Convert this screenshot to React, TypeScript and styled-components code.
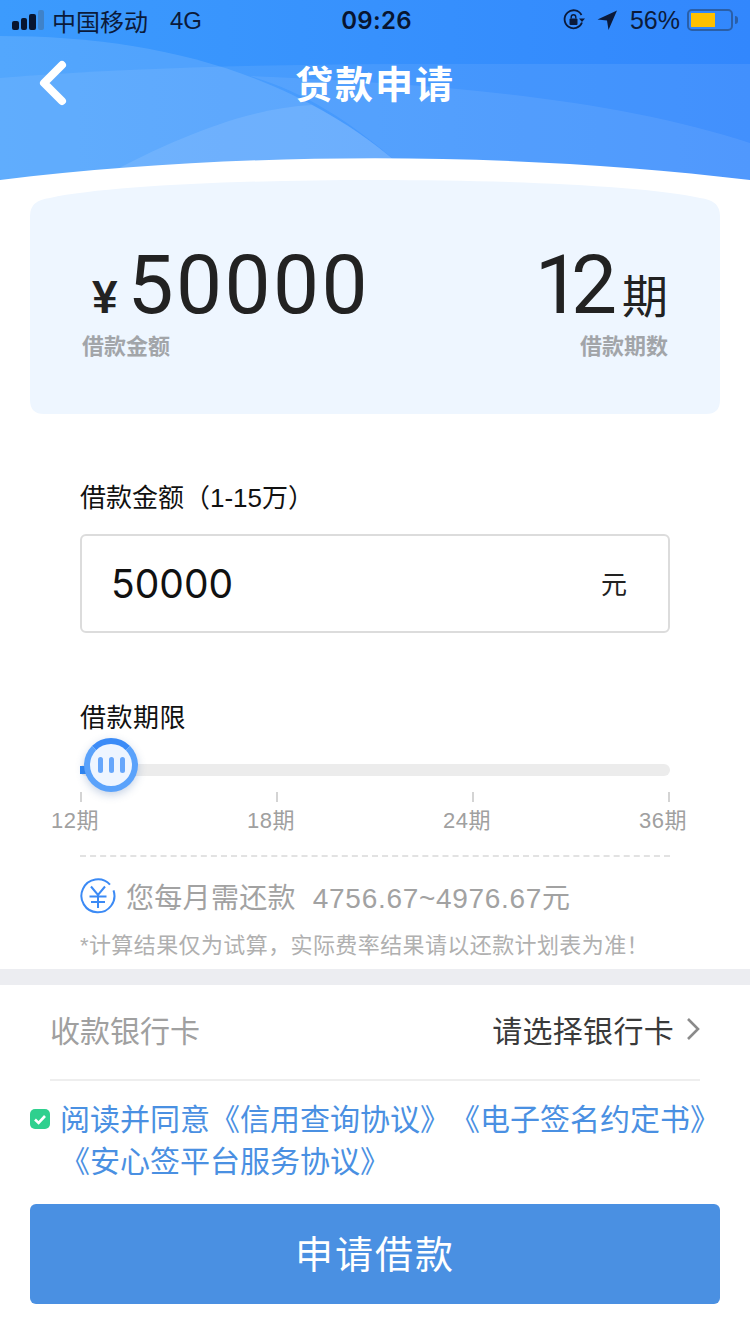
import React from 'react';
import styled, { createGlobalStyle } from 'styled-components';

const FONT = `"Liberation Sans", Arial, "Noto Sans CJK SC", sans-serif`;
const ROUND_FONT = `Inter, "Liberation Sans", "Noto Sans CJK SC", sans-serif`;

const GlobalStyle = createGlobalStyle`
    html, body {
        margin: 0;
        padding: 0;
        background: #fff;
        font-family: ${FONT};
        text-spacing-trim: space-all;
    }
`;

export default function App() {
    return (
        <Page>
            <GlobalStyle />
            <Header>
                <HeaderArt viewBox="0 0 750 180" preserveAspectRatio="none">
                    <defs>
                        <linearGradient id="bg" x1="0" y1="0" x2="1" y2="0">
                            <stop offset="0" stopColor="#3c9bfd" />
                            <stop offset="1" stopColor="#3287fd" />
                        </linearGradient>
                    </defs>
                    <rect width="750" height="180" fill="url(#bg)" />
                    <path d="M0 78C150 66 300 64 450 64L750 64L750 180L0 180Z" fill="#fff" fillOpacity="0.08" />
                    <path d="M250 76C450 84 620 100 750 143L750 180L400 180L400 165C350 120 300 90 250 76Z" fill="#fff" fillOpacity="0.08" />
                    <path d="M0 36C150 36 290 70 400 165L400 180L0 180Z" fill="#fff" fillOpacity="0.12" />
                    <path d="M100 178C180 135 250 108 312 105C343 121 372.5 141 400 165L400 180L100 180Z" fill="#fff" fillOpacity="0.1" />
                    <path d="M0 180C240 151 510 151 750 180Z" fill="#fff" />
                </HeaderArt>
                <StatusBar>
                    <StatusSide>
                        <Signal>
                            <SignalBar $h={9} />
                            <SignalBar $h={12} />
                            <SignalBar $h={16} />
                            <SignalBar $h={20} $dim />
                        </Signal>
                        <Carrier>中国移动</Carrier>
                        <Network>4G</Network>
                    </StatusSide>
                    <Clock>09:26</Clock>
                    <StatusSide>
                        <LockIcon width="24" height="24" viewBox="0 0 24 24" fill="none">
                            <path d="M20 14.5A9 9 0 1 1 19.5 7" stroke="#0b1a3a" strokeWidth="1.8" />
                            <path d="M17 10.5h6l-3 3.6z" fill="#0b1a3a" />
                            <rect x="7.5" y="10.5" width="8" height="6.5" rx="1" fill="#0b1a3a" />
                            <path d="M9.2 10.5V9a2.3 2.3 0 0 1 4.6 0v1.5" stroke="#0b1a3a" strokeWidth="1.4" />
                        </LockIcon>
                        <svg width="22" height="22" viewBox="0 0 22 22">
                            <path d="M21 1.5L1.5 10.5L11 11.5L12.5 21Z" fill="#0b1a3a" />
                        </svg>
                        <Battery>56%</Battery>
                        <BatteryShell>
                            <BatteryFill />
                        </BatteryShell>
                    </StatusSide>
                </StatusBar>
                <NavBar>
                    <BackIcon width="30" height="46" viewBox="0 0 30 46" fill="none">
                        <path d="M24 5L6 23L24 41" stroke="#fff" strokeWidth="8" strokeLinecap="round" strokeLinejoin="round" />
                    </BackIcon>
                    <NavTitle>贷款申请</NavTitle>
                </NavBar>
            </Header>

            <SummaryCard>
                <SummaryColumn>
                    <AmountLine>
                        <Yen>¥</Yen>
                        <BigNumber>50000</BigNumber>
                    </AmountLine>
                    <SummaryLabel>借款金额</SummaryLabel>
                </SummaryColumn>
                <SummaryColumn $right>
                    <AmountLine>
                        <TermNumber>12</TermNumber>
                        <Unit>期</Unit>
                    </AmountLine>
                    <SummaryLabel>借款期数</SummaryLabel>
                </SummaryColumn>
            </SummaryCard>

            <FormSection>
                <FieldLabel>借款金额（1-15万）</FieldLabel>
                <AmountBox>
                    <AmountValue>50000</AmountValue>
                    <AmountUnit>元</AmountUnit>
                </AmountBox>

                <TermLabel>借款期限</TermLabel>
                <Slider>
                    <SliderFill />
                    <Thumb>
                        <Grip />
                        <Grip />
                        <Grip />
                    </Thumb>
                </Slider>
                <Ticks>
                    {['12期', '18期', '24期', '36期'].map(t => (
                        <Tick key={t}>
                            <TickMark />
                            <TickText>{t}</TickText>
                        </Tick>
                    ))}
                </Ticks>
                <DashedRule />
                <Repayment>
                    <svg width="36" height="36" viewBox="0 0 36 36" fill="none">
                        <path d="M30 6.6A16.5 16.5 0 1 0 33.5 12.4" stroke="#3b8af5" strokeWidth="2" />
                        <path d="M11 8.5L18 17L25 8.5M9.5 18.5H26.5M11 24H25M18 17V30" stroke="#3b8af5" strokeWidth="2" />
                    </svg>
                    <RepayLabel>您每月需还款</RepayLabel>
                    <RepayValue>4756.67~4976.67元</RepayValue>
                </Repayment>
                <Disclaimer>*计算结果仅为试算，实际费率结果请以还款计划表为准！</Disclaimer>
            </FormSection>

            <Divider />

            <BankRow>
                <BankLabel>收款银行卡</BankLabel>
                <BankPick>
                    请选择银行卡
                    <svg width="14" height="24" viewBox="0 0 14 24" fill="none">
                        <path d="M2 2L12 12L2 22" stroke="#8a8a8a" strokeWidth="2.6" />
                    </svg>
                </BankPick>
            </BankRow>

            <Agreement>
                <Check viewBox="0 0 20 20" width="20" height="20">
                    <rect width="20" height="20" rx="5" fill="#2fd08e" />
                    <path d="M5 10.5L8.6 14L15 7" fill="none" stroke="#fff" strokeWidth="2.6" />
                </Check>
                <AgreementText>
                    阅读并同意《信用查询协议》《电子签名约定书》
                    <br />
                    《安心签平台服务协议》
                </AgreementText>
            </Agreement>

            <SubmitButton>申请借款</SubmitButton>
        </Page>
    );
}

const Page = styled.div`
    width: 750px;
    height: 1334px;
    overflow: hidden;
    background: #fff;
    display: flex;
    flex-direction: column;
`;

const Header = styled.div`
    position: relative;
    height: 180px;
    flex: none;
`;

const HeaderArt = styled.svg`
    position: absolute;
    inset: 0;
    width: 750px;
    height: 180px;
`;

const StatusBar = styled.div`
    position: relative;
    height: 40px;
    padding: 0 12px;
    display: flex;
    align-items: center;
    justify-content: space-between;
    color: #0b1a3a;
`;

const StatusSide = styled.div`
    display: flex;
    align-items: center;
    gap: 12px;
    width: 300px;
    &:last-child {
        justify-content: flex-end;
    }
`;

const Signal = styled.div`
    display: flex;
    align-items: flex-end;
    gap: 2px;
    height: 20px;
    margin-right: -4px;
`;

const SignalBar = styled.span<{ $h: number; $dim?: boolean }>`
    width: 6.5px;
    height: ${p => p.$h}px;
    border-radius: 2px;
    background: ${p => (p.$dim ? '#3f82c9' : '#081530')};
`;

const Carrier = styled.span`
    font-size: 24px;
`;

const Network = styled.span`
    font-size: 24px;
    margin: 2px 0 0 10px;
`;

const Clock = styled.span`
    font-family: ${ROUND_FONT};
    font-size: 24px;
    font-weight: 600;
    letter-spacing: 0.3px;
    color: #081530;
    margin-left: 3px;
`;

const LockIcon = styled.svg`
    margin-right: -2px;
`;

const Battery = styled.span`
    font-size: 25px;
    margin-right: -5px;
`;

const BatteryShell = styled.div`
    position: relative;
    flex: none;
    width: 46px;
    height: 22px;
    box-sizing: border-box;
    padding: 2px;
    border: 2px solid #2a5fa8;
    border-radius: 5px;
    margin-right: 5px;
    &::after {
        content: '';
        position: absolute;
        right: -7px;
        top: 5px;
        width: 3px;
        height: 8px;
        border-radius: 0 3px 3px 0;
        background: #2a5fa8;
    }
`;

const BatteryFill = styled.div`
    width: 24px;
    height: 14px;
    background: #ffc000;
`;

const NavBar = styled.div`
    position: relative;
    height: 82px;
    display: flex;
    align-items: center;
    justify-content: center;
`;

const BackIcon = styled.svg`
    position: absolute;
    left: 38px;
    top: 20px;
`;

const NavTitle = styled.h1`
    margin: 0;
    font-size: 38px;
    font-weight: 700;
    color: #fff;
    letter-spacing: 2px;
`;

const SummaryCard = styled.div`
    flex: none;
    height: 234px;
    margin: 0 30px;
    padding: 58px 52px 0;
    box-sizing: border-box;
    display: flex;
    justify-content: space-between;
    background: #eef6ff;
    clip-path: path('M0 36 Q0 20 20 18 C130 -6 560 -6 670 18 Q690 20 690 36 L690 220 Q690 234 676 234 L14 234 Q0 234 0 220 Z');
`;

const SummaryColumn = styled.div<{ $right?: boolean }>`
    display: flex;
    flex-direction: column;
    align-items: ${p => (p.$right ? 'flex-end' : 'flex-start')};
`;

const AmountLine = styled.div`
    display: flex;
    align-items: baseline;
    height: 96px;
`;

const Yen = styled.span`
    font-size: 46px;
    font-weight: 700;
    color: #222;
    margin: 0 10px 0 10px;
`;

const BigNumber = styled.span`
    font-family: Roboto, ${FONT};
    font-size: 82px;
    line-height: 94px;
    letter-spacing: 2.4px;
    color: #222;
`;

const TermNumber = styled(BigNumber)`
    letter-spacing: -10px;
`;

const Unit = styled.span`
    font-size: 46px;
    color: #222;
    margin-left: 15px;
`;

const SummaryLabel = styled.span`
    font-size: 22px;
    font-weight: 700;
    color: #a2a5a9;
    line-height: 26px;
`;

const FormSection = styled.div`
    flex: none;
    padding: 67px 80px 0;
    height: 555px;
    box-sizing: border-box;
`;

const FieldLabel = styled.div`
    font-size: 26px;
    line-height: 34px;
    color: #111;
`;

const AmountBox = styled.div`
    margin-top: 19px;
    height: 99px;
    box-sizing: border-box;
    padding: 0 40px 0 29px;
    display: flex;
    align-items: center;
    justify-content: space-between;
    border: 2px solid #dcdcdc;
    border-radius: 6px;
`;

const AmountValue = styled.span`
    font-family: ${ROUND_FONT};
    font-size: 39px;
    color: #111;
`;

const AmountUnit = styled.span`
    font-size: 26px;
    color: #222;
    margin: 0 1px 3px 0;
`;

const TermLabel = styled.div`
    margin-top: 68px;
    font-size: 26px;
    letter-spacing: 0.5px;
    line-height: 34px;
    color: #111;
`;

const Slider = styled.div`
    position: relative;
    margin-top: 29px;
    height: 12px;
    border-radius: 6px;
    background: #ececec;
`;

const SliderFill = styled.div`
    width: 12px;
    height: 8px;
    margin-top: 2px;
    background: #2e86f5;
    position: absolute;
`;

const Thumb = styled.div`
    position: absolute;
    left: 4px;
    top: -26px;
    width: 54px;
    height: 54px;
    box-sizing: border-box;
    border: 6px solid #5aa2fb;
    border-top-color: #3b8bf7;
    border-radius: 50%;
    background: #eef5ff;
    box-shadow: 0 3px 8px rgba(70, 110, 170, 0.3);
    display: flex;
    align-items: center;
    justify-content: center;
    gap: 6px;
`;

const Grip = styled.span`
    width: 5px;
    height: 16px;
    border-radius: 2.5px;
    background: #66a6fb;
`;

const Ticks = styled.div`
    display: flex;
    justify-content: space-between;
    margin-top: 16px;
`;

const Tick = styled.div`
    width: 2px;
    display: flex;
    flex-direction: column;
    align-items: center;
`;

const TickMark = styled.span`
    width: 2px;
    height: 10px;
    background: #d4d4d4;
`;

const TickText = styled.span`
    margin: 4px 12px 0 0;
    font-size: 22px;
    letter-spacing: 0.5px;
    line-height: 30px;
    white-space: nowrap;
    color: #a0a0a0;
`;

const DashedRule = styled.div`
    margin-top: 19px;
    border-top: 2px dashed #e2e2e2;
`;

const Repayment = styled.div`
    margin-top: 21px;
    display: flex;
    align-items: center;
    height: 36px;
`;

const RepayLabel = styled.span`
    margin-left: 10px;
    font-size: 28px;
    letter-spacing: 0.3px;
    color: #a2a2a2;
`;

const RepayValue = styled.span`
    margin-left: 17px;
    font-size: 28px;
    letter-spacing: 0.7px;
    color: #a2a2a2;
`;

const Disclaimer = styled.div`
    margin-top: 17px;
    font-size: 22px;
    letter-spacing: 0.4px;
    line-height: 30px;
    white-space: nowrap;
    color: #b0b0b0;
`;

const Divider = styled.div`
    flex: none;
    height: 16px;
    background: #ecedf1;
`;

const BankRow = styled.div`
    flex: none;
    margin: 0 50px;
    height: 96px;
    box-sizing: border-box;
    padding-bottom: 6px;
    display: flex;
    align-items: center;
    justify-content: space-between;
    border-bottom: 2px solid #eeeeee;
`;

const BankLabel = styled.span`
    font-size: 30px;
    color: #a0a0a0;
`;

const BankPick = styled.span`
    display: flex;
    align-items: center;
    gap: 12px;
    font-size: 30px;
    letter-spacing: 0.3px;
    color: #3a3a3a;
`;

const Agreement = styled.div`
    flex: none;
    margin-top: 18px;
    padding-left: 30px;
    display: flex;
    gap: 10px;
    color: #4a90e2;
`;

const Check = styled.svg`
    flex: none;
    margin-top: 10px;
`;

const AgreementText = styled.div`
    font-size: 30px;
    line-height: 42px;
    white-space: nowrap;
`;

const SubmitButton = styled.button`
    flex: none;
    margin: 21px 30px 0;
    height: 100px;
    padding: 0 0 5px;
    border: 0;
    border-radius: 6px;
    background: #4a90e2;
    color: #fff;
    font-family: ${FONT};
    font-size: 38px;
    letter-spacing: 2px;
`;
